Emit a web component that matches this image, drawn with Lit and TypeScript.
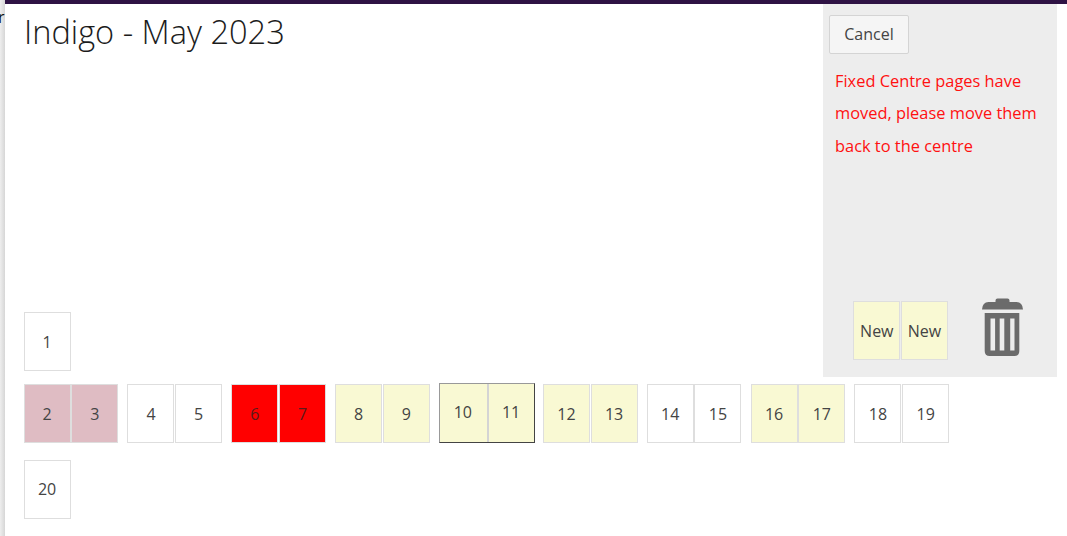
import { LitElement, html, css } from "lit";
import { customElement } from "lit/decorators.js";

type Tone = "plain" | "pink" | "red" | "yellow";
interface Spread { pages: number[]; tone: Tone; active?: boolean }

const rows: Spread[] = [
  { pages: [2, 3], tone: "pink" },
  { pages: [4, 5], tone: "plain" },
  { pages: [6, 7], tone: "red" },
  { pages: [8, 9], tone: "yellow" },
  { pages: [10, 11], tone: "yellow", active: true },
  { pages: [12, 13], tone: "yellow" },
  { pages: [14, 15], tone: "plain" },
  { pages: [16, 17], tone: "yellow" },
  { pages: [18, 19], tone: "plain" },
];

@customElement("app-root")
export class AppRoot extends LitElement {
  static styles = css`
    :host {
      display: flex;
      height: 536px;
      overflow: hidden;
      background: #fff;
      font-family: "Open Sans", sans-serif;
      font-size: 16px;
      color: #444;
    }
    .edge {
      width: 5px;
      flex: none;
      background: linear-gradient(90deg, #eeeeee, #d6d6d6);
      position: relative;
      overflow: hidden;
    }
    .edge span {
      position: absolute;
      left: -2px;
      top: 6px;
      font-size: 16px;
      line-height: 22px;
      color: #111;
    }
    .page-area { flex: 1; min-width: 0; }
    .bar { height: 4px; background: #2e1244; }
    .content { padding-left: 18.6px; }
    .top { display: flex; height: 373px; }
    .main {
      flex: 1;
      display: flex;
      flex-direction: column;
      justify-content: space-between;
      padding-bottom: 6.2px;
    }
    h1 {
      margin: 0;
      padding: 6px 0 0 0.4px;
      font-size: 32.6px;
      font-weight: 300;
      line-height: 44px;
      color: #1c1c1c;
    }
    .side {
      width: 234px;
      margin-right: 10px;
      background: #ededed;
      box-sizing: border-box;
      padding: 11px 6px 0;
      display: flex;
      flex-direction: column;
    }
    button {
      width: 80px;
      height: 39px;
      box-sizing: border-box;
      background: #f5f5f5;
      border: 1px solid #d4d4d4;
      border-radius: 2px;
      font: inherit;
      color: #444;
      padding: 0 0 2px;
    }
    .msg {
      margin: 10.5px 0 0 6px;
      width: 218px;
      color: #f11;
      font-size: 16.4px;
      line-height: 32.5px;
    }
    .tools {
      margin-top: auto;
      display: flex;
      align-items: flex-start;
      padding: 0 0 17.5px 24.3px;
    }
    .tools svg { margin: -2.4px 0 0 33.700px; display: block; }
    .spread { display: flex; gap: 0.7px; }
    .page {
      width: 47px;
      height: 58.8px;
      box-sizing: border-box;
      border: 1px solid #dedede;
      display: flex;
      align-items: center;
      justify-content: center;
      background: #fff;
    }
    .low .page { padding-top: 2px; }
    .plain .page { background: #fff; }
    .pink .page { background: #dfbcc3; }
    .red .page { background: #f00; color: #5a1a1a; }
    .yellow .page { background: #f9f9d3; }
    .row {
      display: flex;
      gap: 9.175px;
      padding-top: 7.2px;
      height: 58.8px;
    }
    .row .spread { width: 94.7px; flex: none; }
    .row .active {
      box-sizing: border-box;
      width: 96.4px;
      height: 60px;
      margin: -1.5px -1.7px 0 0;
      gap: 0;
      border: 1px solid #444;
      border-top-color: #999;
      border-left-color: #999;
    }
    .active .page {
      width: 46.7px;
      height: 58px;
      padding: 0 1px 1px 0;
      border: none;
    }
    .active .page + .page {
      width: 47.7px;
      border-left: 2px solid #d4d4d4;
    }
    .row.last { padding-top: 17px; }
  `;

  private spread(s: Spread) {
    return html`<div class="spread ${s.tone} ${s.active ? "active" : ""}">
      ${s.pages.map((p) => html`<div class="page">${p}</div>`)}
    </div>`;
  }

  render() {
    return html`
      <div class="edge"><span>r</span></div>
      <div class="page-area">
        <div class="bar"></div>
        <div class="content">
          <div class="top">
            <div class="main">
              <h1>Indigo - May 2023</h1>
              <div class="spread plain low"><div class="page">1</div></div>
            </div>
            <aside class="side">
              <button>Cancel</button>
              <p class="msg">Fixed Centre pages have moved, please move them back to the centre</p>
              <div class="tools">
                <div class="spread yellow low">
                  <div class="page">New</div>
                  <div class="page">New</div>
                </div>
                <svg width="41" height="59" viewBox="0 0 41 59" fill="#6b6b6b">
                  <path d="M13.5 4v-1.500q0-2 2-2h10q2 0 2 2v1.500h7q6 0 6.500 7.500H0q.5-7.500 6.500-7.500z" />
                  <path fill-rule="evenodd" d="M2.700 15h34.600v38q0 5-5 5H7.700q-5 0-5-5zM8.500 20.500v32h4.600v-32zM17.700 20.500v32h4.600v-32zM28.200 20.500v32h4.300v-32z" />
                </svg>
              </div>
            </aside>
          </div>
          <div class="row">${rows.map((s) => this.spread(s))}</div>
          <div class="row last">${this.spread({ pages: [20], tone: "plain" })}</div>
        </div>
      </div>
    `;
  }
}
